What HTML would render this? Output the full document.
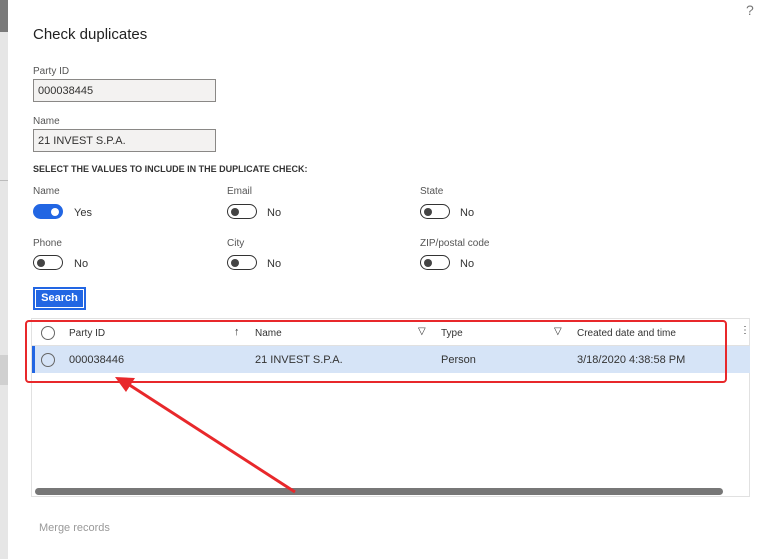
<!DOCTYPE html>
<html><head><style>
body{margin:0;width:767px;height:559px;background:#fff;font-family:"Liberation Sans",sans-serif;position:relative;overflow:hidden;color:#323130}
.a{position:absolute}
.lbl{font-size:10px;color:#555}
.inp{position:absolute;left:33px;width:183px;height:23px;border:1px solid #8a8886;background:#f3f2f1;font-size:11px;line-height:23px;padding-left:4px;box-sizing:border-box}
.tg{position:absolute;width:30px;height:15px;border:1px solid #333;border-radius:8px;box-sizing:border-box}
.tg::after{content:"";position:absolute;left:3px;top:2.5px;width:8px;height:8px;border-radius:50%;background:#444}
.tg.on{background:#2266e3;border-color:#2266e3}
.tg.on::after{left:auto;right:3px;background:#fff}
.v{font-size:11px;color:#333}
.rad{position:absolute;width:14px;height:14px;border:1px solid #666;border-radius:50%;box-sizing:border-box}
.h{font-size:10px;color:#333}
</style></head><body>
<div class="a" style="left:0;top:0;width:8px;height:559px;background:#e6e6e6"></div>
<div class="a" style="left:0;top:0;width:8px;height:32px;background:#7a7a7a"></div>
<div class="a" style="left:0;top:180px;width:8px;height:1px;background:#bbb"></div>
<div class="a" style="left:0;top:355px;width:8px;height:30px;background:#d0d0d0"></div>
<div class="a" style="left:746px;top:2px;font-size:14px;color:#777">?</div>
<div class="a" style="left:33px;top:26px;font-size:15px;color:#222">Check duplicates</div>
<div class="a lbl" style="left:33px;top:66px">Party ID</div>
<div class="inp" style="top:79px">000038445</div>
<div class="a lbl" style="left:33px;top:116px">Name</div>
<div class="inp" style="top:129px">21 INVEST S.P.A.</div>
<div class="a" style="left:33px;top:164px;font-size:9px;font-weight:bold;color:#333">SELECT THE VALUES TO INCLUDE IN THE DUPLICATE CHECK:</div>
<div class="a lbl" style="left:33px;top:186px">Name</div>
<div class="tg on" style="left:33px;top:204px"></div><div class="a v" style="left:74px;top:207px">Yes</div>
<div class="a lbl" style="left:227px;top:186px">Email</div>
<div class="tg" style="left:227px;top:204px"></div><div class="a v" style="left:267px;top:207px">No</div>
<div class="a lbl" style="left:420px;top:186px">State</div>
<div class="tg" style="left:420px;top:204px"></div><div class="a v" style="left:460px;top:207px">No</div>
<div class="a lbl" style="left:33px;top:238px">Phone</div>
<div class="tg" style="left:33px;top:255px"></div><div class="a v" style="left:74px;top:258px">No</div>
<div class="a lbl" style="left:227px;top:238px">City</div>
<div class="tg" style="left:227px;top:255px"></div><div class="a v" style="left:267px;top:258px">No</div>
<div class="a lbl" style="left:420px;top:238px">ZIP/postal code</div>
<div class="tg" style="left:420px;top:255px"></div><div class="a v" style="left:460px;top:258px">No</div>
<div class="a" style="left:33px;top:287px;width:53px;height:23px;background:#2266e3;box-sizing:border-box;border:1px solid #2266e3"><div style="margin:1px;border:1px solid #fff;height:17px;color:#fff;font-size:11px;font-weight:bold;text-align:center;line-height:17px">Search</div></div>
<div class="a" style="left:31px;top:318px;width:719px;height:179px;border:1px solid #e1e1e1;box-sizing:border-box"></div>
<div class="a" style="left:32px;top:345px;width:718px;height:1px;background:#e1e1e1"></div>
<div class="rad" style="left:41px;top:326px"></div>
<div class="a h" style="left:69px;top:328px">Party ID</div>
<div class="a h" style="left:234px;top:326px;font-size:11px">↑</div>
<div class="a h" style="left:255px;top:328px">Name</div>
<div class="a h" style="left:418px;top:326px">▽</div>
<div class="a h" style="left:441px;top:328px">Type</div>
<div class="a h" style="left:554px;top:326px">▽</div>
<div class="a h" style="left:577px;top:328px">Created date and time</div>
<div class="a h" style="left:740px;top:325px">⋮</div>
<div class="a" style="left:32px;top:346px;width:718px;height:27px;background:#d6e4f7"></div>
<div class="a" style="left:32px;top:346px;width:3px;height:27px;background:#2266e3"></div>
<div class="rad" style="left:41px;top:353px"></div>
<div class="a v" style="left:69px;top:354px">000038446</div>
<div class="a v" style="left:255px;top:354px">21 INVEST S.P.A.</div>
<div class="a v" style="left:441px;top:354px">Person</div>
<div class="a v" style="left:577px;top:354px">3/18/2020 4:38:58 PM</div>
<div class="a" style="left:35px;top:488px;width:688px;height:7px;border-radius:4px;background:#777"></div>
<div class="a" style="left:39px;top:522px;font-size:11px;color:#999">Merge records</div>
<div class="a" style="left:25px;top:320px;width:702px;height:63px;border:2px solid #e8282b;border-radius:4px;box-sizing:border-box"></div>
<svg class="a" style="left:0;top:0" width="767" height="559"><line x1="295" y1="492" x2="128" y2="384" stroke="#e8282b" stroke-width="3"/><polygon points="115,377 135,378 126,392" fill="#e8282b"/></svg>
</body></html>
